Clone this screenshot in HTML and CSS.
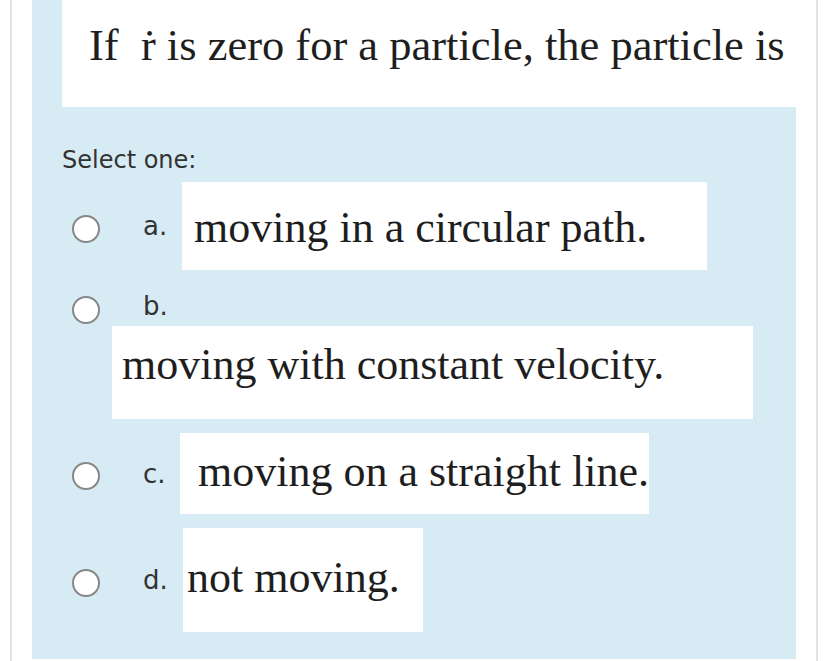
FILE: index.html
```html
<!DOCTYPE html>
<html lang="en">
<head>
<meta charset="utf-8">
<title>Question</title>
<link rel="stylesheet" href="styles.css">
</head>
<body>
<div class="page">
  <div class="que">
    <div class="qtext">If&nbsp; ṙ is zero for a particle, the particle is</div>
    <div class="prompt">Select one:</div>
    <div class="answers">
      <div class="option">
        <span class="radio"></span>
        <div class="answer">
          <span class="num">a.</span>
          <span class="box box-a">moving in a circular path.</span>
        </div>
      </div>
      <div class="option option-b">
        <span class="radio"></span>
        <div class="answer">
          <span class="num">b.</span>
          <span class="box box-b">moving with constant velocity.</span>
        </div>
      </div>
      <div class="option">
        <span class="radio"></span>
        <div class="answer">
          <span class="num">c.</span>
          <span class="box box-c">moving on a straight line.</span>
        </div>
      </div>
      <div class="option">
        <span class="radio"></span>
        <div class="answer">
          <span class="num">d.</span>
          <span class="box box-d">not moving.</span>
        </div>
      </div>
    </div>
  </div>
</div>
</body>
</html>
```
FILE: styles.css
```css
html, body {
  margin: 0;
  padding: 0;
  background: #ffffff;
}

body {
  height: 661px;
  overflow: hidden;
}

.page {
  box-sizing: border-box;
  width: 808px;
  height: 661px;
  margin-left: 10px;
  padding: 0 20px;
  border-left: 2px solid #e2e2e2;
  border-right: 2px solid #e2e2e2;
}

.que {
  box-sizing: border-box;
  width: 764px;
  min-height: 659px;
  background: #d6ebf4;
  padding: 0 0 27px 30px;
}

.qtext {
  background: #ffffff;
  font-family: "Liberation Serif", "Times New Roman", serif;
  font-size: 44.5px;
  line-height: 44px;
  color: #1e1e1e;
  padding: 23px 0 40px 27px;
  white-space: nowrap;
}

.prompt {
  margin-top: 39px;
  font-family: "DejaVu Sans", Verdana, sans-serif;
  font-size: 24px;
  line-height: 28px;
  color: #333333;
}

.answers {
  margin-top: 8px;
  display: flex;
  flex-direction: column;
  gap: 14px;
}

.option {
  display: flex;
  align-items: center;
}

.radio {
  flex: none;
  box-sizing: border-box;
  width: 28px;
  height: 28px;
  margin: 5px 12px 0 10px;
  border: 2px solid #878787;
  border-radius: 50%;
  background: #ffffff;
}

.answer {
  display: flex;
  flex-wrap: wrap;
  align-items: center;
  row-gap: 5px;
  flex: 1;
}

.num {
  width: 25px;
  margin-left: 31px;
  margin-right: 14px;
  font-family: "DejaVu Sans", Verdana, sans-serif;
  font-size: 26px;
  line-height: 30px;
  color: #333333;
  white-space: nowrap;
}

.box {
  background: #ffffff;
  font-family: "Liberation Serif", "Times New Roman", serif;
  font-size: 44px;
  line-height: 44px;
  color: #1e1e1e;
  white-space: nowrap;
}

.box-a {
  padding: 24px 60px 20px 12px;
}

.option-b {
  align-items: flex-start;
  margin-top: 7px;
}

.option-b .radio {
  margin-top: 5px;
}

.box-b {
  padding: 17px 89px 32px 10px;
}

.box-c {
  margin-left: -2px;
  padding: 17px 0 20px 18px;
}

.box-d {
  margin-left: 1px;
  padding: 28px 23px 32px 4px;
}
```
